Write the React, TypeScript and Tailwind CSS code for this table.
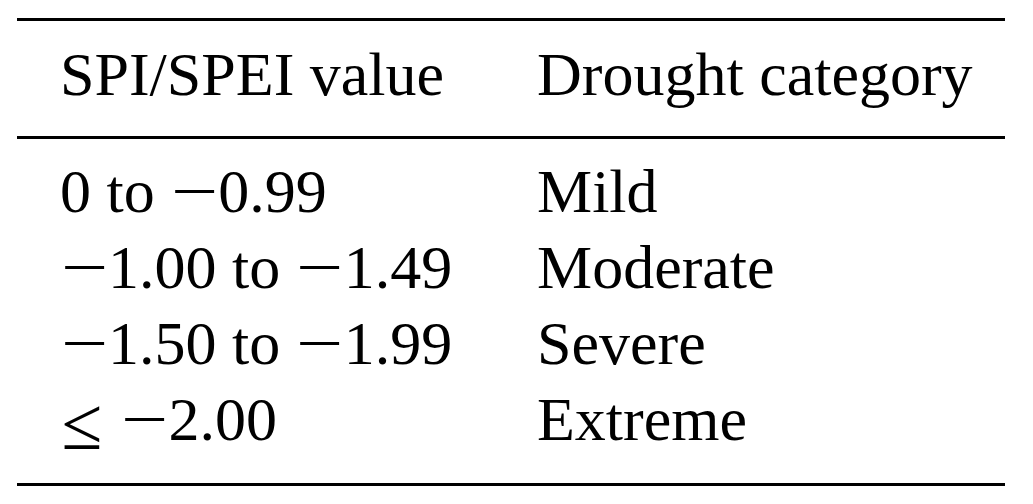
import React from "react";

function Minus() {
  return (
    <span className="inline-block w-[48px] text-center">
      <span className="inline-block scale-x-[1.35]">{"\u2212"}</span>
    </span>
  );
}

function Leq() {
  return (
    <span className="inline-block w-[45px] text-center">
      <span className="inline-block scale-[1.2] translate-y-[5px]">{"\u2264"}</span>
    </span>
  );
}

const rows: [React.ReactNode, string][] = [
  [<>0 to <Minus />0.99</>, "Mild"],
  [<><Minus />1.00 to <Minus />1.49</>, "Moderate"],
  [<><Minus />1.50 to <Minus />1.99</>, "Severe"],
  [<><Leq /> <Minus />2.00</>, "Extreme"],
];

export default function App() {
  return (
    <div className="w-[1033px] h-[504px] bg-white pt-[18px] pl-[17px] text-black [font-family:'Liberation_Serif','Times_New_Roman',serif] text-[62px] leading-[76px]">
      <div className="w-[988px]">
        <div className="border-t-[3px] border-black" />
        <div className="grid grid-cols-[520px_1fr] pt-[15px] pb-[24px]">
          <div className="pl-[43px]">SPI/SPEI value</div>
          <div>Drought category</div>
        </div>
        <div className="border-t-[3px] border-black" />
        <div className="grid grid-cols-[520px_1fr] pt-[14px] pb-[26px]">
          {rows.map(([a, b]) => (
            <React.Fragment key={b}>
              <div className="pl-[43px] whitespace-nowrap">{a}</div>
              <div>{b}</div>
            </React.Fragment>
          ))}
        </div>
        <div className="border-t-[3px] border-black" />
      </div>
    </div>
  );
}
